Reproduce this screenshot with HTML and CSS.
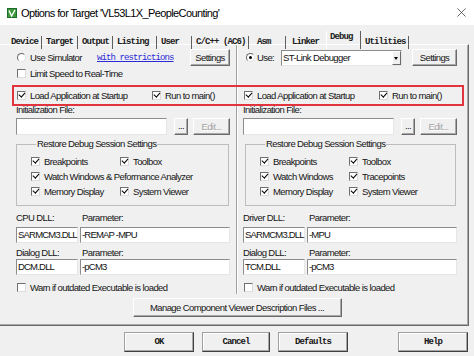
FILE: index.html
```html
<!DOCTYPE html>
<html>
<head>
<meta charset="utf-8">
<title>Options for Target</title>
<link rel="stylesheet" href="styles.css">
</head>
<body>
<div class="dialog">
  <header class="titlebar">
    <svg class="app-icon" viewBox="0 0 10 10"><rect x="0.5" y="0.5" width="9" height="9" fill="#3c9a3c" stroke="#1f6a2a"/><path d="M2 2.5 L4.6 8 L8 2" fill="none" stroke="#fff" stroke-width="1.4"/></svg>
    <span class="title">Options for Target 'VL53L1X_PeopleCounting'</span>
    <svg class="close" viewBox="0 0 10 10"><path d="M0.5 0.5 L9.5 9.5 M9.5 0.5 L0.5 9.5" stroke="#444" stroke-width="0.9" fill="none"/></svg>
  </header>

  <nav class="tabs">
    <span class="tab">Device</span>
    <span class="tab">Target</span>
    <span class="tab">Output</span>
    <span class="tab">Listing</span>
    <span class="tab">User</span>
    <span class="tab">C/C++ (AC6)</span>
    <span class="tab tab-asm">Asm</span>
    <span class="tab tab-linker">Linker</span>
    <span class="tab tab-active">Debug</span>
    <span class="tab">Utilities</span>
  </nav>

  <main class="page">
    <div class="columns">
      <section class="col">
        <div class="row-top">
          <span class="radio"></span>
          <span class="opt-sim">Use Simulator</span>
          <span class="link">with restrictions</span>
          <span class="btn btn-settings">Settings</span>
        </div>
        <label class="row"><span class="cb"></span>Limit Speed to Real-Time</label>
        <div class="row-load">
          <label class="check"><span class="cb on"></span>Load Application at Startup</label>
          <label class="check"><span class="cb on"></span>Run to main()</label>
        </div>
        <div class="lbl">Initialization File:</div>
        <div class="row-file">
          <span class="field field-grow"></span>
          <span class="btn btn-dots">...</span>
          <span class="btn btn-edit">Edit...</span>
        </div>
        <fieldset class="group">
          <legend>Restore Debug Session Settings</legend>
          <div class="group-grid">
            <label class="check"><span class="cb on"></span>Breakpoints</label>
            <label class="check"><span class="cb on"></span>Toolbox</label>
            <label class="check span2"><span class="cb on"></span>Watch Windows &amp; Peformance Analyzer</label>
            <label class="check"><span class="cb on"></span>Memory Display</label>
            <label class="check"><span class="cb on"></span>System Viewer</label>
          </div>
        </fieldset>
        <div class="dll-labels"><span>CPU DLL:</span><span class="param">Parameter:</span></div>
        <div class="dll-inputs"><span class="field">SARMCM3.DLL</span><span class="field">-REMAP -MPU</span></div>
        <div class="dll-labels dll-second"><span>Dialog DLL:</span><span class="param">Parameter:</span></div>
        <div class="dll-inputs dll-inputs-second"><span class="field">DCM.DLL</span><span class="field">-pCM3</span></div>
        <label class="row row-warn"><span class="cb"></span>Warn if outdated Executable is loaded</label>
      </section>

      <div class="divider"></div>

      <section class="col col-right">
        <div class="row-top">
          <span class="radio radio-on"></span>
          <span class="opt-use">Use:</span>
          <span class="select"><span class="select-text">ST-Link Debugger</span><span class="select-arrow"></span></span>
          <span class="btn btn-settings2">Settings</span>
        </div>
        <div class="row"></div>
        <div class="row-load">
          <label class="check"><span class="cb on"></span>Load Application at Startup</label>
          <label class="check"><span class="cb on"></span>Run to main()</label>
        </div>
        <div class="lbl">Initialization File:</div>
        <div class="row-file">
          <span class="field field-grow"></span>
          <span class="btn btn-dots">...</span>
          <span class="btn btn-edit">Edit...</span>
        </div>
        <fieldset class="group">
          <legend>Restore Debug Session Settings</legend>
          <div class="group-grid">
            <label class="check"><span class="cb on"></span>Breakpoints</label>
            <label class="check"><span class="cb on"></span>Toolbox</label>
            <label class="check"><span class="cb on"></span>Watch Windows</label>
            <label class="check"><span class="cb on"></span>Tracepoints</label>
            <label class="check"><span class="cb on"></span>Memory Display</label>
            <label class="check"><span class="cb on"></span>System Viewer</label>
          </div>
        </fieldset>
        <div class="dll-labels"><span>Driver DLL:</span><span class="param">Parameter:</span></div>
        <div class="dll-inputs"><span class="field">SARMCM3.DLL</span><span class="field">-MPU</span></div>
        <div class="dll-labels dll-second"><span>Dialog DLL:</span><span class="param">Parameter:</span></div>
        <div class="dll-inputs dll-inputs-second"><span class="field">TCM.DLL</span><span class="field">-pCM3</span></div>
        <label class="row row-warn"><span class="cb"></span>Warn if outdated Executable is loaded</label>
      </section>
    </div>
    <div class="manage-row">
      <span class="btn btn-manage">Manage Component Viewer Description Files ...</span>
    </div>
  </main>

  <footer class="buttons">
    <span class="btn btn-foot">OK</span>
    <span class="btn btn-foot btn-cancel">Cancel</span>
    <span class="btn btn-foot">Defaults</span>
    <span class="btn btn-foot btn-help">Help</span>
  </footer>

  <div class="annotation"></div>
</div>
</body>
</html>
```

FILE: styles.css
```css
* { box-sizing: border-box; }
html, body { margin: 0; padding: 0; }
body {
  width: 474px;
  height: 356px;
  overflow: hidden;
  background: #f0f0f0;
  font-family: "Liberation Sans", Arial, sans-serif;
  font-size: 9.5px;
  letter-spacing: -0.6px;
  color: #151515;
}
.dialog { position: relative; width: 474px; height: 356px; }

/* title bar */
.titlebar {
  height: 25px;
  background: #fff;
  display: flex;
  align-items: center;
  padding-left: 7px;
}
.app-icon { width: 10px; height: 10px; display: block; }
.title { margin-left: 4px; font-size: 11px; letter-spacing: -0.6px; color: #000; }
.close { margin-left: auto; margin-right: 8px; width: 9px; height: 9px; display: block; }

/* tabs */
.tabs {
  display: grid;
  grid-template-columns: 34px 36px 35px 44px 35px 57px 37px 40px 35px 48px;
  height: 13px;
  margin: 6px 0 0 8px;
  align-items: end;
}
.tab {
  height: 13px;
  line-height: 12px;
  padding-left: 4px;
  border-right: 1px solid #5e5e5e;
  font-family: "Liberation Mono", "DejaVu Sans Mono", monospace;
  font-weight: bold;
  font-size: 9px;
  letter-spacing: -0.9px;
  color: #202020;
  white-space: nowrap;
}
.tab:first-child { padding-left: 3px; }
.tab-asm { padding-left: 8px; }
.tab-linker { padding-left: 6px; border-right: none; }
.tab-active {
  height: 18px;
  padding: 0 0 6px 3px;
  border-left: 1px solid #fff;
}

/* page */
.page {
  width: 469px;
  height: 282px;
  border-top: 1px solid #fff;
  border-right: 1px solid #6a6a6a;
  border-bottom: 1px solid #6a6a6a;
  box-shadow: inset -1px -1px 0 #a8a8a8;
  padding: 0 10px 0 16px;
  display: flex;
  flex-direction: column;
}
.columns {
  display: grid;
  grid-template-columns: 214px 1px 214px;
  column-gap: 6px;
}
.divider { background: #a0a0a0; box-shadow: 1px 0 0 #fff; }
.col { display: flex; flex-direction: column; padding-top: 4px; }

.row-top { height: 17px; display: flex; align-items: center; }
.row { height: 14px; display: flex; align-items: center; }
.row-load {
  height: 14px;
  margin-top: 8px;
  display: grid;
  grid-template-columns: 135px 1fr;
  align-items: center;
}
.lbl { height: 12px; line-height: 12px; margin-top: 2px; }
.row-file { height: 17px; margin-top: 2px; display: flex; }
.row-warn { margin-top: 5px; }

.check { display: flex; align-items: center; white-space: nowrap; }

/* checkbox & radio */
.cb {
  position: relative;
  flex: none;
  width: 9px;
  height: 9px;
  margin: 0 4px 0 1px;
  background: #fff;
  border: 1px solid;
  border-color: #707070 #dcdcdc #dcdcdc #707070;
}
.cb.on::after {
  content: "";
  position: absolute;
  left: 2px;
  top: -1px;
  width: 2.5px;
  height: 5px;
  border: solid #000;
  border-width: 0 1.6px 1.6px 0;
  transform: rotate(42deg);
}
.radio {
  position: relative;
  flex: none;
  width: 9px;
  height: 9px;
  margin: 0 4px 0 1px;
  border-radius: 50%;
  background: #fff;
  border: 1px solid;
  border-color: #6a6a6a #e4e4e4 #e4e4e4 #6a6a6a;
}
.radio-on::after {
  content: "";
  position: absolute;
  left: 2px;
  top: 2px;
  width: 3px;
  height: 3px;
  border-radius: 50%;
  background: #000;
}
.col-right .radio { margin: 0 2px 0 3px; }

.opt-sim { width: 67px; }
.opt-use { width: 24px; }
.link {
  font-family: "Liberation Mono", "DejaVu Sans Mono", monospace;
  font-size: 9px;
  letter-spacing: -0.9px;
  color: #2a2ad8;
  text-decoration: underline;
}

/* buttons */
.btn {
  display: flex;
  align-items: center;
  justify-content: center;
  background: #f0f0f0;
  border: 1px solid;
  border-color: #fff #6a6a6a #6a6a6a #fff;
  box-shadow: inset -1px -1px 0 #a8a8a8;
  color: #151515;
  white-space: nowrap;
}
.btn-settings { margin-left: auto; width: 40px; height: 17px; }
.btn-settings2 { margin-left: auto; width: 45px; height: 17px; }
.btn-dots { width: 14px; height: 17px; margin-left: 7px; padding-bottom: 3px; }
.btn-edit { width: 37px; height: 17px; margin-left: 5px; color: #a3a3a3; text-shadow: 1px 1px 0 #fff; }

/* fields */
.field {
  display: block;
  height: 16px;
  line-height: 14px;
  padding-left: 1px;
  background: #fff;
  border: 1px solid;
  border-color: #8c8c8c #e6e6e6 #e6e6e6 #8c8c8c;
  color: #111;
  letter-spacing: -0.8px;
  white-space: nowrap;
}
.field-grow { flex: 1; height: 17px; }

.select {
  display: flex;
  width: 121px;
  height: 16px;
  background: #fff;
  border: 1px solid;
  border-color: #8c8c8c #e6e6e6 #e6e6e6 #8c8c8c;
}
.select-text { flex: 1; line-height: 14px; padding-left: 1px; color: #111; }
.select-arrow {
  position: relative;
  width: 9px;
  height: 14px;
  background: #f0f0f0;
  border: 1px solid;
  border-color: #fff #6a6a6a #6a6a6a #fff;
}
.select-arrow::after {
  content: "";
  position: absolute;
  left: 1px;
  top: 5px;
  border-left: 2.5px solid transparent;
  border-right: 2.5px solid transparent;
  border-top: 3px solid #000;
}

/* group box */
.group {
  margin: 3px 1px 0 0;
  padding: 4px 0 6px 13px;
  min-width: 0;
  border: 1px solid #bdbdbd;
}
.col-right .group { margin-left: 2px; }
.group legend {
  padding: 0 1px;
  margin-left: 6px;
  line-height: 12px;
  height: 12px;
}
.group-grid {
  display: grid;
  grid-template-columns: 89px 1fr;
  grid-auto-rows: 15px;
  align-items: center;
}
.span2 { grid-column: 1 / -1; }

/* DLL rows */
.dll-labels {
  margin-top: 6px;
  height: 12px;
  line-height: 12px;
  display: grid;
  grid-template-columns: 62px 1fr;
  column-gap: 2px;
}
.dll-second { margin-top: 4px; }
.param { padding-left: 2px; }
.dll-inputs {
  margin-top: 3px;
  display: grid;
  grid-template-columns: 62px 1fr;
  column-gap: 2px;
}
.dll-inputs-second { margin-top: 0; }

/* manage */
.manage-row { margin-top: 4px; display: flex; justify-content: center; }
.btn-manage { width: 209px; height: 19px; }

/* footer */
.buttons {
  display: flex;
  gap: 8px;
  margin-top: 6px;
  padding-left: 124px;
}
.btn-foot {
  width: 70px;
  height: 20px;
  font-family: "Liberation Mono", "DejaVu Sans Mono", monospace;
  font-weight: bold;
  font-size: 9px;
  letter-spacing: -0.9px;
  border-color: #a0a0a0 #404040 #404040 #a0a0a0;
  box-shadow: inset -1px -1px 0 #a8a8a8, inset 1px 1px 0 #fff;
}
.btn-cancel { width: 68px; }
.btn-help { margin-left: 42px; }

/* red annotation overlay */
.annotation {
  position: absolute;
  left: 12px;
  top: 85px;
  width: 452px;
  height: 21px;
  border: 2px solid #e2343d;
  pointer-events: none;
}
```
